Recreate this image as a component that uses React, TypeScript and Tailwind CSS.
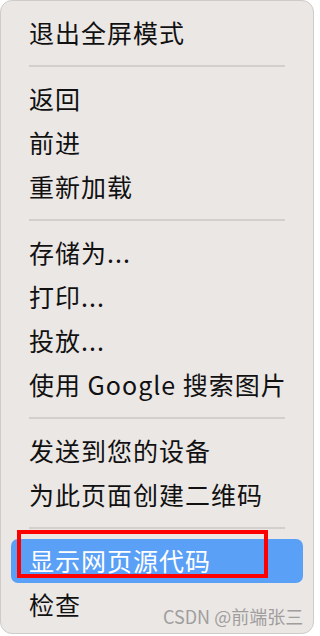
type Item = { label: string; active?: boolean } | 'sep';

const items: Item[] = [
  { label: '退出全屏模式' },
  'sep',
  { label: '返回' },
  { label: '前进' },
  { label: '重新加载' },
  'sep',
  { label: '存储为...' },
  { label: '打印...' },
  { label: '投放...' },
  { label: '使用 Google 搜索图片' },
  'sep',
  { label: '发送到您的设备' },
  { label: '为此页面创建二维码' },
  'sep',
  { label: '显示网页源代码', active: true },
  { label: '检查' },
];

export default function App() {
  return (
    <div className="h-[636px] w-[314px] bg-white font-['Noto_Sans_CJK_SC','Noto_Sans',sans-serif]">
      <div className="relative h-[634px] w-[314px] rounded-[12px] border border-[#cfcbc9] bg-[#ebe7e5] pt-[10px]">
        {items.map((item, i) =>
          item === 'sep' ? (
            <div key={i} className="flex h-[22px] items-center px-[28px]">
              <div className="h-[2px] w-full bg-[#d3cfcd]" />
            </div>
          ) : (
            <div
              key={i}
              className={
                item.active
                  ? 'relative mx-[10px] flex h-[44px] items-center rounded-[7px] bg-[#5ba0f7] pl-[18px] text-[25px] text-white'
                  : 'flex h-[44px] items-center pl-[28px] text-[25px] text-[#111]'
              }
            >
              <span className="tracking-[1px]">{item.label}</span>
              {item.active && (
                <div className="absolute left-[6px] top-[-9px] h-[48px] w-[251px] border-[4px] border-[#ff0000]" />
              )}
            </div>
          )
        )}
        {/* watermark */}
        <div className="absolute left-[162px] top-[603px] text-[18px] leading-[24px] text-[#a09e9d]">
          CSDN @前端张三
        </div>
      </div>
    </div>
  );
}
